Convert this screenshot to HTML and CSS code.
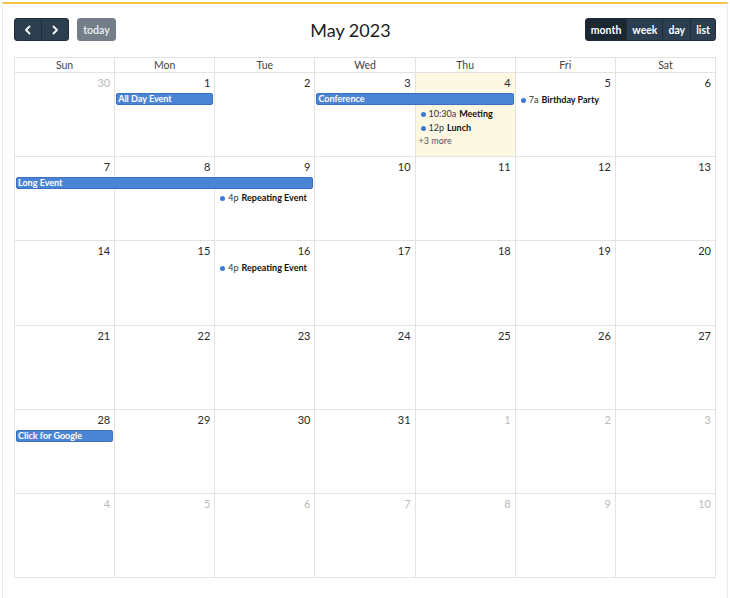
FILE: index.html
```html
<!DOCTYPE html>
<html lang="en">
<head>
    <meta charset="UTF-8">
    <title>Calendar - May 2023</title>
    <link rel="stylesheet" href="styles.css">
</head>
<body>
    <div class="frame">
        <div class="toolbar">
            <div class="toolbar-left">
                <div class="btn-group">
                    <button class="btn btn-arrow" aria-label="prev">
                        <svg width="8" height="10" viewBox="0 0 8 10"><path d="M5.5 1.5 L2 5 L5.5 8.5" fill="none" stroke="#fff" stroke-width="1.8" stroke-linecap="round" stroke-linejoin="round"/></svg>
                    </button>
                    <button class="btn btn-arrow" aria-label="next">
                        <svg width="8" height="10" viewBox="0 0 8 10"><path d="M2.5 1.5 L6 5 L2.5 8.5" fill="none" stroke="#fff" stroke-width="1.8" stroke-linecap="round" stroke-linejoin="round"/></svg>
                    </button>
                </div>
                <button class="btn btn-today">today</button>
            </div>
            <h2 class="title">May 2023</h2>
            <div class="btn-group">
                <button class="btn active">month</button>
                <button class="btn">week</button>
                <button class="btn">day</button>
                <button class="btn">list</button>
            </div>
        </div>

        <div class="calendar">
            <div class="head">
                <div>Sun</div><div>Mon</div><div>Tue</div><div>Wed</div><div>Thu</div><div>Fri</div><div>Sat</div>
            </div>

            <!-- semaine 1 -->
            <div class="week">
                <div class="day c1"></div><div class="day c2"></div><div class="day c3"></div><div class="day c4"></div><div class="day c5 today"></div><div class="day c6"></div><div class="day c7"></div>
                <div class="num c1 other">30</div><div class="num c2">1</div><div class="num c3">2</div><div class="num c4">3</div><div class="num c5">4</div><div class="num c6">5</div><div class="num c7">6</div>
                <div class="bar r2 c2">All Day Event</div>
                <div class="bar r2 c4 span2">Conference</div>
                <div class="dot-ev r2 c6"><span class="dot"></span>7a <b>Birthday Party</b></div>
                <div class="dot-ev r3 c5"><span class="dot"></span>10:30a <b>Meeting</b></div>
                <div class="dot-ev r4 c5"><span class="dot"></span>12p <b>Lunch</b></div>
                <div class="more r5 c5">+3 more</div>
            </div>

            <!-- semaine 2 -->
            <div class="week">
                <div class="day c1"></div><div class="day c2"></div><div class="day c3"></div><div class="day c4"></div><div class="day c5"></div><div class="day c6"></div><div class="day c7"></div>
                <div class="num c1">7</div><div class="num c2">8</div><div class="num c3">9</div><div class="num c4">10</div><div class="num c5">11</div><div class="num c6">12</div><div class="num c7">13</div>
                <div class="bar r2 c1 span3">Long Event</div>
                <div class="dot-ev r3 c3"><span class="dot"></span>4p <b>Repeating Event</b></div>
            </div>

            <!-- semaine 3 -->
            <div class="week">
                <div class="day c1"></div><div class="day c2"></div><div class="day c3"></div><div class="day c4"></div><div class="day c5"></div><div class="day c6"></div><div class="day c7"></div>
                <div class="num c1">14</div><div class="num c2">15</div><div class="num c3">16</div><div class="num c4">17</div><div class="num c5">18</div><div class="num c6">19</div><div class="num c7">20</div>
                <div class="dot-ev r2 c3"><span class="dot"></span>4p <b>Repeating Event</b></div>
            </div>

            <!-- semaine 4 -->
            <div class="week">
                <div class="day c1"></div><div class="day c2"></div><div class="day c3"></div><div class="day c4"></div><div class="day c5"></div><div class="day c6"></div><div class="day c7"></div>
                <div class="num c1">21</div><div class="num c2">22</div><div class="num c3">23</div><div class="num c4">24</div><div class="num c5">25</div><div class="num c6">26</div><div class="num c7">27</div>
            </div>

            <!-- semaine 5 -->
            <div class="week">
                <div class="day c1"></div><div class="day c2"></div><div class="day c3"></div><div class="day c4"></div><div class="day c5"></div><div class="day c6"></div><div class="day c7"></div>
                <div class="num c1">28</div><div class="num c2">29</div><div class="num c3">30</div><div class="num c4">31</div><div class="num c5 other">1</div><div class="num c6 other">2</div><div class="num c7 other">3</div>
                <div class="bar r2 c1">Click for Google</div>
            </div>

            <!-- semaine 6 -->
            <div class="week">
                <div class="day c1"></div><div class="day c2"></div><div class="day c3"></div><div class="day c4"></div><div class="day c5"></div><div class="day c6"></div><div class="day c7"></div>
                <div class="num c1 other">4</div><div class="num c2 other">5</div><div class="num c3 other">6</div><div class="num c4 other">7</div><div class="num c5 other">8</div><div class="num c6 other">9</div><div class="num c7 other">10</div>
            </div>
        </div>
    </div>
</body>
</html>
```

FILE: styles.css
```css
* {
    box-sizing: border-box;
}

body {
    margin: 0;
    padding: 0;
    font-family: Lato, "Noto Sans", sans-serif;
    color: #222;
    background-color: #fff;
}

.frame {
    margin: 2px 2px 0 2px;
    min-height: 596px;
    border-top: 2px solid #f6c445;
    border-left: 1px solid #ececec;
    border-right: 1px solid #ececec;
    padding: 14px 11px 0;
}

/* barre d'outils */

.toolbar {
    display: flex;
    justify-content: space-between;
    align-items: center;
    margin-bottom: 16px;
}

.toolbar-left {
    display: flex;
    gap: 8px;
}

.title {
    margin: 0;
    font-size: 18px;
    font-weight: 400;
    color: #1c1c1c;
}

.btn-group {
    display: flex;
}

.btn {
    height: 23px;
    padding: 0 5px;
    font-family: inherit;
    font-size: 10.5px;
    font-weight: 700;
    color: #fff;
    background-color: #2c3e50;
    border: 1px solid #1f2d3a;
    border-radius: 0;
    cursor: pointer;
}

.btn-group .btn + .btn {
    margin-left: -1px;
}

.btn-group .btn:first-child {
    border-radius: 3px 0 0 3px;
}

.btn-group .btn:last-child {
    border-radius: 0 3px 3px 0;
}

.btn.active {
    background-color: #1b2733;
}

.btn-arrow {
    width: 28px;
    display: flex;
    align-items: center;
    justify-content: center;
}

.btn-today {
    width: 39px;
    border-radius: 3px;
    background-color: #747e89;
    border-color: #747e89;
    color: #e4e7ea;
}

/* calendrier */

.calendar {
    border-top: 1px solid #e3e3e3;
    border-left: 1px solid #e3e3e3;
}

.head {
    display: grid;
    grid-template-columns: repeat(7, 1fr);
}

.head div {
    height: 15px;
    line-height: 14px;
    font-size: 10.5px;
    text-align: center;
    color: #444;
    border-right: 1px solid #e3e3e3;
    border-bottom: 1px solid #e3e3e3;
}

.week {
    display: grid;
    grid-template-columns: repeat(7, 1fr);
    grid-template-rows: 20px 14px 14px 14px 13px 1fr;
    height: 84.2px;
}

.day {
    grid-row: 1 / -1;
    border-right: 1px solid #e3e3e3;
    border-bottom: 1px solid #e3e3e3;
}

.day.today {
    background-color: #fdf8e2;
}

.c1 { grid-column: 1; }
.c2 { grid-column: 2; }
.c3 { grid-column: 3; }
.c4 { grid-column: 4; }
.c5 { grid-column: 5; }
.c6 { grid-column: 6; }
.c7 { grid-column: 7; }
.c1.span3 { grid-column: 1 / 4; }
.c4.span2 { grid-column: 4 / 6; }

.r2 { grid-row: 2; }
.r3 { grid-row: 3; }
.r4 { grid-row: 4; }
.r5 { grid-row: 5; }

.num {
    grid-row: 1;
    text-align: right;
    padding: 3px 5px 0 0;
    font-size: 11px;
    line-height: 14px;
    color: #2a2a2a;
}

.num.other {
    color: #bbb;
}

.bar {
    align-self: start;
    margin: 0 2px 0 1px;
    height: 12px;
    padding-left: 1px;
    font-size: 9px;
    line-height: 10px;
    font-weight: 700;
    color: #fff;
    background-color: #4a84d4;
    border: 1px solid #3a72c0;
    border-radius: 2px;
    white-space: nowrap;
    overflow: hidden;
}

.dot-ev {
    display: flex;
    align-items: center;
    padding-left: 5px;
    font-size: 9px;
    line-height: 12px;
    color: #333;
    white-space: nowrap;
    overflow: hidden;
}

.dot-ev b {
    margin-left: 3px;
    color: #111;
}

.dot {
    width: 5px;
    height: 5px;
    margin-right: 3px;
    border-radius: 50%;
    background-color: #3b7ad6;
}

.more {
    padding-left: 3px;
    font-size: 9px;
    line-height: 12px;
    color: #555;
}
```
